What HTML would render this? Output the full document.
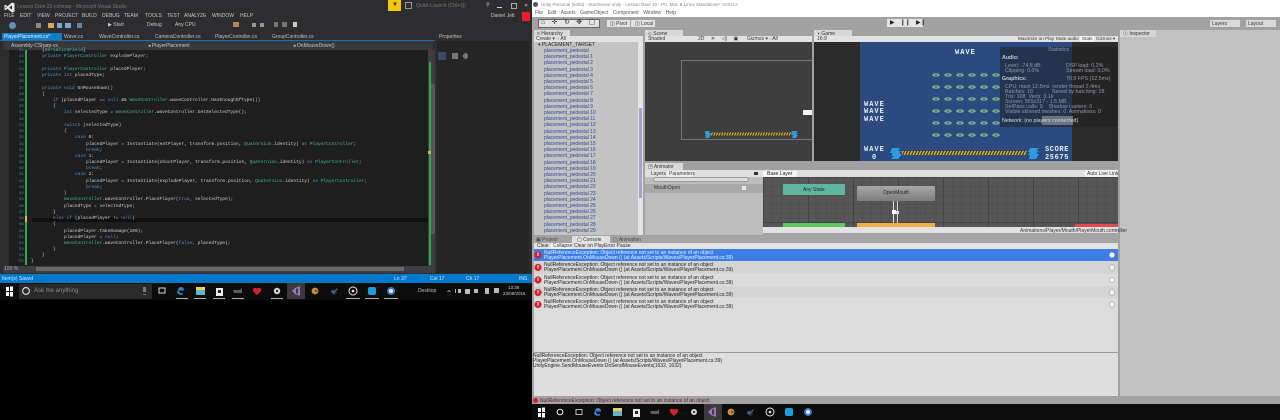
<!DOCTYPE html>
<html><head><meta charset="utf-8"><title>Screenshot</title>
<style>
html,body{margin:0;padding:0;background:#000}
#r{position:relative;width:1280px;height:420px;overflow:hidden;background:#000;font-family:"Liberation Sans",sans-serif}
#r div{position:absolute}
.t{position:absolute;white-space:pre;line-height:6px;font-size:5px}
#r .c{position:absolute;white-space:pre;left:0;font:4.55px/6px "Liberation Mono",monospace;color:#cfcfcf}
.k{color:#4f8fc8}.y{color:#45b49c}
.n{position:absolute;left:19px;font:4px/6px "Liberation Mono",monospace;color:#2b91af}
.h{color:#2f4a96}.b{color:#222}
.g{font:bold 7px/7px "Liberation Mono",monospace;color:#e8f0f0;letter-spacing:1px}
.s{color:#8f99a4;font-size:5.3px}
.m{color:#c8c8c8;top:13px}
</style></head><body><div id="r">

<!-- VISUAL STUDIO -->
<div style="left:0;top:0;width:532px;height:283px;background:#2d2d30"></div>
<svg style="position:absolute;left:4px;top:2px" width="11" height="11" viewBox="0 0 11 11"><path d="M8 0.5L10.5 1.5V9.5L8 10.5L3.5 6.8L1.5 8.3L0.5 7.6V3.4L1.5 2.7L3.5 4.2ZM8 3.2L5.2 5.5L8 7.8ZM1.6 4.4V6.6L2.7 5.5Z" fill="#e8e8e8"/></svg>
<span class="t" style="left:17px;top:4px;color:#777">Lesson Dare 22-cshmap - Microsoft Visual Studio</span>
<span class="t m" style="left:4px">FILE</span><span class="t m" style="left:20px">EDIT</span><span class="t m" style="left:37px">VIEW</span><span class="t m" style="left:55px">PROJECT</span><span class="t m" style="left:82px">BUILD</span><span class="t m" style="left:102px">DEBUG</span><span class="t m" style="left:124px">TEAM</span><span class="t m" style="left:145px">TOOLS</span><span class="t m" style="left:167px">TEST</span><span class="t m" style="left:184px">ANALYZE</span><span class="t m" style="left:212px">WINDOW</span><span class="t m" style="left:240px">HELP</span>
<div style="left:9px;top:22px;width:7px;height:7px;border-radius:50%;background:#5a92c4"></div>
<div style="left:36px;top:23px;width:5px;height:5px;background:#888"></div>
<div style="left:48px;top:23px;width:6px;height:5px;background:#d8a848"></div>
<div style="left:57px;top:23px;width:5px;height:5px;background:#7ea6d4"></div>
<div style="left:65px;top:23px;width:6px;height:5px;background:#7ea6d4"></div>
<div style="left:77px;top:23px;width:5px;height:5px;background:#6284b0"></div>
<span class="t" style="left:108px;top:22px;color:#c8c8c8">▶ Start</span>
<span class="t" style="left:147px;top:22px;color:#c8c8c8">Debug</span>
<span class="t" style="left:175px;top:22px;color:#c8c8c8">Any CPU</span>
<div style="left:233px;top:22px;width:6px;height:5px;background:#b08a48"></div>
<div style="left:252px;top:23px;width:4px;height:4px;background:#999"></div>
<div style="left:260px;top:23px;width:4px;height:4px;background:#999"></div>
<div style="left:274px;top:22px;width:4px;height:5px;background:#777"></div>
<div style="left:282px;top:22px;width:5px;height:5px;background:#777"></div>
<div style="left:293px;top:22px;width:4px;height:5px;background:#ccc"></div>
<div style="left:388px;top:0;width:13px;height:11px;background:#f6c800"></div>
<span class="t" style="left:392px;top:2px;color:#222;font-size:6px">▼</span>
<div style="left:405px;top:2px;width:5px;height:5px;border:1px solid #999"></div>
<span class="t" style="left:416px;top:3px;color:#777">Quick Launch (Ctrl+Q)</span>
<span class="t" style="left:486px;top:2px;color:#ccc">⚲</span>
<div style="left:497px;top:7px;width:5px;height:1px;background:#ccc"></div>
<div style="left:511px;top:3px;width:4px;height:4px;border:1px solid #aaa"></div>
<span class="t" style="left:524px;top:3px;color:#ccc">✕</span>
<span class="t" style="left:491px;top:13px;color:#c8c8c8">Daniel Jett</span>
<div style="left:522px;top:12px;width:8px;height:9px;background:#ee1c24"></div>

<!-- tabs -->
<div style="left:2px;top:33px;width:60px;height:8px;background:#1080c8"></div>
<span class="t" style="left:4px;top:34px;color:#f0f0f0">PlayerPlacement.cs*</span>
<span class="t" style="left:64px;top:34px;color:#c0c0c0">Wave.cs</span>
<span class="t" style="left:99px;top:34px;color:#c0c0c0">WaveController.cs</span>
<span class="t" style="left:155px;top:34px;color:#c0c0c0">CameraController.cs</span>
<span class="t" style="left:215px;top:34px;color:#c0c0c0">PlayerController.cs</span>
<span class="t" style="left:272px;top:34px;color:#c0c0c0">GroupController.cs</span>
<div style="left:0;top:40px;width:435px;height:1px;background:#1c6fa8"></div>
<div style="left:3px;top:41px;width:430px;height:9px;background:#38383c"></div>
<span class="t" style="left:11px;top:43px;color:#c8c8c8">Assembly-CSharp-vs</span>
<span class="t" style="left:148px;top:43px;color:#c8c8c8">◂ PlayerPlacement</span>
<span class="t" style="left:293px;top:43px;color:#c8c8c8">◂ OnMouseDown()</span>

<!-- editor -->
<div style="left:9px;top:50px;width:420px;height:216px;background:#1e1e1e"></div>
<div style="left:25px;top:50px;width:2px;height:215px;background:#22b04c"></div>
<div style="left:25px;top:216px;width:2px;height:6px;background:#e6c020"></div>
<div style="left:32px;top:218px;width:396px;height:4px;background:#0f0f0f"></div>
<div style="left:3px;top:266px;width:426px;height:7px;background:#3e3e42"></div>
<div style="left:36px;top:267px;width:368px;height:4px;background:#686868"></div>
<span class="t" style="left:4px;top:266px;color:#aaa">100 %</span>
<!-- right rail of editor -->
<div style="left:428px;top:50px;width:7px;height:223px;background:#3e3e42"></div>
<div style="left:428.5px;top:62px;width:2.5px;height:203px;background:#22b04c"></div>
<div style="left:428px;top:151px;width:6px;height:3px;background:#d4b828"></div>
<div style="left:431px;top:84px;width:4px;height:150px;background:#55555a"></div>

<span class="c" style="left:42px;top:48px">[<span class="y">SerializeField</span>]</span>
<span class="c" style="left:42px;top:54px"><span class="k">private</span> <span class="y">PlayerController</span> explodePlayer;</span>
<span class="c" style="left:42px;top:67px"><span class="k">private</span> <span class="y">PlayerController</span> placedPlayer;</span>
<span class="c" style="left:42px;top:73px"><span class="k">private</span> <span class="k">int</span> placedType;</span>
<span class="c" style="left:42px;top:86px"><span class="k">private</span> <span class="k">void</span> OnMouseDown()</span>
<span class="c" style="left:42px;top:92px">{</span>
<span class="c" style="left:53px;top:98px"><span class="k">if</span> (placedPlayer == <span class="k">null</span> &amp;&amp; <span class="y">WaveController</span>.waveController.HasEnoughOfType())</span>
<span class="c" style="left:53px;top:104px">{</span>
<span class="c" style="left:64px;top:110px"><span class="k">int</span> selectedType = <span class="y">WaveController</span>.waveController.GetSelectedType();</span>
<span class="c" style="left:64px;top:123px"><span class="k">switch</span> (selectedType)</span>
<span class="c" style="left:64px;top:129px">{</span>
<span class="c" style="left:75px;top:135px"><span class="k">case</span> 0:</span>
<span class="c" style="left:86px;top:142px">placedPlayer = Instantiate(eatPlayer, transform.position, <span class="y">Quaternion</span>.identity) <span class="k">as</span> <span class="y">PlayerController</span>;</span>
<span class="c" style="left:86px;top:148px"><span class="k">break</span>;</span>
<span class="c" style="left:75px;top:154px"><span class="k">case</span> 1:</span>
<span class="c" style="left:86px;top:160px">placedPlayer = Instantiate(shootPlayer, transform.position, <span class="y">Quaternion</span>.identity) <span class="k">as</span> <span class="y">PlayerController</span>;</span>
<span class="c" style="left:86px;top:166px"><span class="k">break</span>;</span>
<span class="c" style="left:75px;top:172px"><span class="k">case</span> 2:</span>
<span class="c" style="left:86px;top:179px">placedPlayer = Instantiate(explodePlayer, transform.position, <span class="y">Quaternion</span>.identity) <span class="k">as</span> <span class="y">PlayerController</span>;</span>
<span class="c" style="left:86px;top:185px"><span class="k">break</span>;</span>
<span class="c" style="left:64px;top:191px">}</span>
<span class="c" style="left:64px;top:197px"><span class="y">WaveController</span>.waveController.PlaceFlayer(<span class="k">true</span>, selectedType);</span>
<span class="c" style="left:64px;top:204px">placedType = selectedType;</span>
<span class="c" style="left:53px;top:210px">}</span>
<span class="c" style="left:53px;top:216px"><span class="k">else if</span> (placedPlayer != <span class="k">null</span>)</span>
<span class="c" style="left:53px;top:222px">{</span>
<span class="c" style="left:64px;top:229px">placedPlayer.TakeDamage(100);</span>
<span class="c" style="left:64px;top:235px">placedPlayer = <span class="k">null</span>;</span>
<span class="c" style="left:64px;top:241px"><span class="y">WaveController</span>.waveController.PlaceFlayer(<span class="k">false</span>, placedType);</span>
<span class="c" style="left:53px;top:247px">}</span>
<span class="c" style="left:42px;top:253px">}</span>
<span class="c" style="left:31px;top:259px">}</span>

<span class="n" style="top:48px">21</span><span class="n" style="top:54px">22</span><span class="n" style="top:60px">23</span><span class="n" style="top:67px">24</span><span class="n" style="top:73px">25</span><span class="n" style="top:79px">26</span><span class="n" style="top:86px">27</span><span class="n" style="top:92px">28</span><span class="n" style="top:98px">29</span><span class="n" style="top:104px">30</span><span class="n" style="top:110px">31</span><span class="n" style="top:117px">32</span><span class="n" style="top:123px">33</span><span class="n" style="top:129px">34</span><span class="n" style="top:135px">35</span><span class="n" style="top:142px">36</span><span class="n" style="top:148px">37</span><span class="n" style="top:154px">38</span><span class="n" style="top:160px">39</span><span class="n" style="top:166px">40</span><span class="n" style="top:172px">41</span><span class="n" style="top:179px">42</span><span class="n" style="top:185px">43</span><span class="n" style="top:191px">44</span><span class="n" style="top:197px">45</span><span class="n" style="top:204px">46</span><span class="n" style="top:210px">47</span><span class="n" style="top:216px">48</span><span class="n" style="top:222px">49</span><span class="n" style="top:229px">50</span><span class="n" style="top:235px">51</span><span class="n" style="top:241px">52</span><span class="n" style="top:247px">53</span><span class="n" style="top:253px">54</span><span class="n" style="top:259px">55</span>

<!-- Properties -->
<span class="t" style="left:439px;top:34px;color:#c0c0c0">Properties</span>
<div style="left:437px;top:41px;width:92px;height:232px;background:#252526"></div>
<div style="left:438px;top:52px;width:8px;height:8px;background:#3a4a60"></div>
<div style="left:452px;top:53px;width:6px;height:6px;background:#777"></div>
<div style="left:463px;top:53px;width:5px;height:6px;background:#777;border-radius:50%"></div>
<!-- status -->
<div style="left:0;top:274px;width:532px;height:9px;background:#007acc"></div>
<span class="t" style="left:2px;top:276px;color:#d8eaf8">Item(s) Saved</span>
<span class="t" style="left:394px;top:276px;color:#d8eaf8">Ln 37</span>
<span class="t" style="left:430px;top:276px;color:#d8eaf8">Col 17</span>
<span class="t" style="left:466px;top:276px;color:#d8eaf8">Ch 17</span>
<span class="t" style="left:519px;top:276px;color:#d8eaf8">INS</span>

<!-- left taskbar -->
<div style="left:0;top:283px;width:532px;height:17px;background:#0c0c0c"></div>
<div style="left:19px;top:284px;width:133px;height:15px;background:#2a2a2a"></div>
<span class="t" style="left:34px;top:288px;color:#8a8a8a;font-size:6px">Ask me anything</span>
<div style="left:287px;top:283px;width:18px;height:16px;background:#3a3a3a"></div>
<span class="t" style="left:418px;top:288px;color:#bbb">Desktop</span>
<span class="t" style="left:508px;top:285px;color:#ccc;font-size:4.5px">13:38</span>
<span class="t" style="left:503px;top:291px;color:#ccc;font-size:4.5px">23/08/2015</span>
<svg style="position:absolute;left:0;top:283px" width="532" height="17">
 <path d="M6 4h3v4H6zM10 3.5h3V8h-3zM6 9h3v4H6zM10 9h3v4.5h-3z" fill="#fff"/>
 <circle cx="26" cy="8" r="3.4" fill="none" stroke="#e8e8e8" stroke-width="1.1"/>
 <path d="M143 4h3v5h-3zM143 11h3v1h-3z" fill="#777"/>
 <rect x="159" y="5" width="6" height="5" fill="none" stroke="#ccc" stroke-width="1.1"/>
 <path d="M178 8q0-4 3-4t3 3.5h-5q0 3.5 4 2.5v1.5q-6 1-6-3z" fill="#2a86d6"/>
 <path d="M196 4h9v8h-9z" fill="#e8d060"/><path d="M196 7h9v5h-9z" fill="#62b8c8"/>
 <path d="M216 5h7v8h-7z" fill="#eee"/><path d="M218 7h3v3h-3z" fill="#222"/>
 <path d="M233 7h7l2-2v5h-8z" fill="#5e5e5e"/>
 <path d="M253 6q1-2 4-.5q3-1.5 4 .5t-4 6q-5-4-4-6z" fill="#d8222a"/>
 <circle cx="277" cy="8" r="3.2" fill="#d8d8d8"/><circle cx="277" cy="8" r="1.2" fill="#222"/>
 <path d="M292 8l3-3 5-2v10l-5-2zM296 6v4l2 1V5z" fill="#a070c8"/>
 <circle cx="315" cy="8" r="3.4" fill="#e88a20"/><circle cx="316" cy="8" r="1.4" fill="#3a5a90"/>
 <path d="M331 9l3 2 4-6-4 3-2-1z" fill="#7ea4d0"/><circle cx="334" cy="9" r="3" fill="#22395a" opacity=".6"/>
 <circle cx="353" cy="8" r="4" fill="none" stroke="#e8e8e8"/><circle cx="353" cy="8" r="1.3" fill="#e8e8e8"/>
 <rect x="368" y="4" width="8" height="8" rx="2" fill="#18a0e0"/>
 <circle cx="391" cy="8" r="4" fill="#3a78d0"/><circle cx="391" cy="8" r="2" fill="#e8f0f8"/>
 <g fill="#bbb"><path d="M447 9l2-2 2 2h-1l-1-1-1 1zM455 6h1v4h-1zM458 6h3v4h-3zM465 6h5v5h-5zM474 6h4v4h-4zM485 5h4v6h-4zM494 5h5v5h-5z"/></g>
 <g fill="#aaa"><rect x="176" y="15" width="12" height="1"/><rect x="194" y="15" width="12" height="1"/><rect x="213" y="15" width="12" height="1"/><rect x="232" y="15" width="12" height="1"/><rect x="271" y="15" width="12" height="1"/><rect x="346" y="15" width="14" height="1"/><rect x="365" y="15" width="14" height="1"/><rect x="384" y="15" width="14" height="1"/></g>
</svg>

<!-- UNITY -->
<div style="left:532px;top:0;width:748px;height:405px;background:#a2a2a2"></div>
<div style="left:532px;top:0;width:748px;height:17px;background:#fff"></div>
<div style="left:533px;top:2px;width:5px;height:5px;border-radius:50%;background:#555"></div>
<span class="t" style="left:541px;top:2px;color:#888;font-size:4.5px">Unity Personal (64bit) - StartScene.unity - Lesson Dare 10 - PC, Mac &amp; Linux Standalone* &lt;DX11&gt;</span>
<span class="t" style="left:535px;top:10px;color:#555;word-spacing:3.2px">File Edit Assets GameObject Component Window Help</span>
<!-- toolbar -->
<div style="left:538px;top:19px;width:62px;height:9px;background:#e4e4e4;border:1px solid #666;box-sizing:border-box"></div>
<span class="t" style="left:541px;top:20px;color:#333;font-size:7px;word-spacing:4.5px">⌂ ✛ ↻ ✥ ▢</span>
<div style="left:607px;top:20px;width:23px;height:7px;background:#e2e2e2"></div><span class="t" style="left:610px;top:21px;color:#333">◫ Pivot</span>
<div style="left:631px;top:20px;width:24px;height:7px;background:#e2e2e2"></div><span class="t" style="left:635px;top:21px;color:#333">◫ Local</span>
<div style="left:887px;top:19px;width:36px;height:8px;background:#e4e4e4"></div>
<span class="t" style="left:890px;top:20px;color:#222;font-size:6px;word-spacing:4px">▶ ❙❙ ▶❙</span>
<div style="left:1210px;top:20px;width:30px;height:7px;background:#d8d8d8"></div><span class="t" style="left:1212px;top:21px;color:#333">Layers</span>
<div style="left:1246px;top:20px;width:30px;height:7px;background:#d8d8d8"></div><span class="t" style="left:1248px;top:21px;color:#333">Layout</span>

<!-- Hierarchy -->
<div style="left:534px;top:30px;width:36px;height:7px;background:#d8d8d8"></div>
<span class="t" style="left:537px;top:31px;color:#333">≡ Hierarchy</span>
<div style="left:534px;top:36px;width:109px;height:6px;background:#e2e2e2"></div>
<span class="t" style="left:536px;top:36px;color:#333">Create ▾ ◌ All</span>
<div style="left:534px;top:42px;width:109px;height:193px;background:#c3c3c3"></div>
<div style="left:638px;top:42px;width:5px;height:193px;background:#e4e4e4"></div>
<div style="left:639px;top:108px;width:3px;height:90px;background:#a0a4c8"></div>
<span class="t h" style="left:538px;top:42px;color:#222">▾ PLACEMENT_TARGET</span>
<span class="t h" style="left:544px;top:48px">placement_pedestal</span>
<span class="t h" style="left:544px;top:54px">placement_pedestal 1</span>
<span class="t h" style="left:544px;top:60px">placement_pedestal 2</span>
<span class="t h" style="left:544px;top:67px">placement_pedestal 3</span>
<span class="t h" style="left:544px;top:73px">placement_pedestal 4</span>
<span class="t h" style="left:544px;top:79px">placement_pedestal 5</span>
<span class="t h" style="left:544px;top:85px">placement_pedestal 6</span>
<span class="t h" style="left:544px;top:91px">placement_pedestal 7</span>
<span class="t h" style="left:544px;top:98px">placement_pedestal 8</span>
<span class="t h" style="left:544px;top:104px">placement_pedestal 9</span>
<span class="t h" style="left:544px;top:110px">placement_pedestal 10</span>
<span class="t h" style="left:544px;top:116px">placement_pedestal 11</span>
<span class="t h" style="left:544px;top:122px">placement_pedestal 12</span>
<span class="t h" style="left:544px;top:129px">placement_pedestal 13</span>
<span class="t h" style="left:544px;top:135px">placement_pedestal 14</span>
<span class="t h" style="left:544px;top:141px">placement_pedestal 15</span>
<span class="t h" style="left:544px;top:147px">placement_pedestal 16</span>
<span class="t h" style="left:544px;top:153px">placement_pedestal 17</span>
<span class="t h" style="left:544px;top:160px">placement_pedestal 18</span>
<span class="t h" style="left:544px;top:166px">placement_pedestal 19</span>
<span class="t h" style="left:544px;top:172px">placement_pedestal 20</span>
<span class="t h" style="left:544px;top:178px">placement_pedestal 21</span>
<span class="t h" style="left:544px;top:184px">placement_pedestal 22</span>
<span class="t h" style="left:544px;top:191px">placement_pedestal 23</span>
<span class="t h" style="left:544px;top:197px">placement_pedestal 24</span>
<span class="t h" style="left:544px;top:203px">placement_pedestal 25</span>
<span class="t h" style="left:544px;top:209px">placement_pedestal 26</span>
<span class="t h" style="left:544px;top:215px">placement_pedestal 27</span>
<span class="t h" style="left:544px;top:222px">placement_pedestal 28</span>
<span class="t h" style="left:544px;top:228px">placement_pedestal 29</span>

<!-- Scene -->
<div style="left:645px;top:30px;width:38px;height:7px;background:#d8d8d8"></div>
<span class="t" style="left:648px;top:31px;color:#333">◇ Scene</span>
<div style="left:645px;top:36px;width:167px;height:6px;background:#e2e2e2"></div>
<span class="t" style="left:648px;top:36px;color:#333">Shaded</span>
<span class="t" style="left:698px;top:36px;color:#333;word-spacing:5px">2D ☀ ◁) ▣</span>
<span class="t" style="left:747px;top:36px;color:#333">Gizmos ▾ ◌All</span>
<div style="left:645px;top:42px;width:167px;height:119px;background:#3e3e3e"></div>
<div style="left:681px;top:60px;width:132px;height:80px;border:1px solid #777;border-right:0;box-sizing:border-box"></div>
<div style="left:803px;top:110px;width:9px;height:5px;background:#f4f4f4"></div>
<svg style="position:absolute;left:703px;top:129px" width="100" height="10">
 <defs><pattern id="hs" width="2.6" height="3" patternUnits="userSpaceOnUse" patternTransform="skewX(-25)"><rect width="2.6" height="3" fill="#222"/><rect width="1.5" height="3" fill="#d8b828"/></pattern></defs>
 <rect x="8" y="3.5" width="80" height="3" fill="url(#hs)"/>
 <path d="M2 2h5l-1 2h2l-1 2h1l-2 3H2l1-2H2l1-2H2z" fill="#2a9ce0"/>
 <path d="M89 2h6l-2 2h2l-2 2h2l-2 3h-4l1-3h-2l1-2h-1z" fill="#2a9ce0"/>
</svg>

<!-- Game -->
<div style="left:814px;top:30px;width:38px;height:7px;background:#d8d8d8"></div>
<span class="t" style="left:817px;top:31px;color:#333">◖ Game</span>
<div style="left:814px;top:36px;width:304px;height:6px;background:#e2e2e2"></div>
<span class="t" style="left:817px;top:36px;color:#333">16:9</span>
<span class="t" style="left:1018px;top:36px;color:#333;font-size:4.6px">Maximize on Play</span>
<span class="t" style="left:1056px;top:36px;color:#333;font-size:4.6px">Mute audio</span>
<div style="left:1080px;top:36px;width:14px;height:6px;background:#f4f4f4"></div>
<span class="t" style="left:1082px;top:36px;color:#333;font-size:4.6px">Stats</span>
<span class="t" style="left:1096px;top:36px;color:#333;font-size:4.6px">Gizmos ▾</span>
<div style="left:814px;top:42px;width:304px;height:119px;background:#2b2b2b"></div>
<div style="left:860px;top:42px;width:212px;height:119px;background:#2b4a80"></div>
<svg style="position:absolute;left:860px;top:42px" width="212" height="119">
 <defs>
 <pattern id="e" width="12" height="12" patternUnits="userSpaceOnUse" x="70" y="28"><ellipse cx="6" cy="5" rx="3.8" ry="1.8" fill="#7db38f"/><ellipse cx="6" cy="5" rx="1.4" ry=".8" fill="#3c6868"/></pattern>
 <pattern id="hz" width="3" height="4" patternUnits="userSpaceOnUse" patternTransform="skewX(-25)"><rect width="3" height="4" fill="#222"/><rect width="1.8" height="4" fill="#d8b828"/></pattern>
 </defs>
 <rect x="70" y="28" width="72" height="72" fill="url(#e)"/>
 <rect x="42" y="109" width="125" height="4" fill="url(#hz)"/>
 <path d="M32 106h8l-2 3h3l-2 3h3l-4 5h-7l3-3h-3l2-3h-3z" fill="#2a9ce0"/>
 <path d="M170 106h9l-3 3h3l-3 3h3l-3 5h-7l1-4h-2l2-3h-2z" fill="#2a9ce0"/>
</svg>
<span class="t g" style="left:955px;top:50px">WAVE</span>
<span class="t g" style="left:864px;top:102px">WAVE</span>
<span class="t g" style="left:864px;top:109px">WAVE</span>
<span class="t g" style="left:864px;top:117px">WAVE</span>
<span class="t g" style="left:864px;top:147px">WAVE</span>
<span class="t g" style="left:872px;top:155px">0</span>
<span class="t g" style="left:1045px;top:147px;letter-spacing:.6px">SCORE</span>
<span class="t g" style="left:1045px;top:155px;letter-spacing:.6px">25675</span>
<!-- stats overlay -->
<div style="left:1000px;top:47px;width:118px;height:80px;background:rgba(30,30,30,.5)"></div>
<span class="t s" style="left:1048px;top:47px">Statistics</span>
<span class="t s" style="left:1002px;top:55px;color:#c4ccd2;font-weight:bold">Audio:</span>
<span class="t s" style="left:1005px;top:63px">Level: -74.8 dB</span>
<span class="t s" style="left:1005px;top:68px">Clipping: 0.0%</span>
<span class="t s" style="left:1066px;top:63px">DSP load: 0.2%</span>
<span class="t s" style="left:1066px;top:68px">Stream load: 0.0%</span>
<span class="t s" style="left:1002px;top:76px;color:#c4ccd2;font-weight:bold">Graphics:</span>
<span class="t s" style="left:1066px;top:76px">70.9 FPS (12.5ms)</span>
<span class="t s" style="left:1005px;top:84px">CPU: main 12.5ms  render thread 2.4ms</span>
<span class="t s" style="left:1005px;top:89px">Batches: 18</span>
<span class="t s" style="left:1052px;top:89px">Saved by batching: 28</span>
<span class="t s" style="left:1005px;top:94px">Tris: 108  Verts: 3.1k</span>
<span class="t s" style="left:1005px;top:99px">Screen: 565x317 - 1.5 MB</span>
<span class="t s" style="left:1005px;top:104px">SetPass calls: 9    Shadow casters: 0</span>
<span class="t s" style="left:1005px;top:109px">Visible skinned meshes: 0  Animations: 0</span>
<div style="left:1042px;top:116px;width:31px;height:9px;background:rgba(170,170,170,.55)"></div>
<span class="t s" style="left:1002px;top:118px;color:#d4dae0">Network: (no players connected)</span>

<!-- Inspector -->
<div style="left:1120px;top:30px;width:160px;height:375px;background:#c2c2c2"></div>
<div style="left:1120px;top:30px;width:36px;height:7px;background:#d6d6d6"></div>
<span class="t" style="left:1123px;top:31px;color:#333">ⓘ Inspector</span>

<!-- Animator -->
<div style="left:645px;top:161px;width:473px;height:8px;background:#a0a0a0"></div>
<div style="left:645px;top:163px;width:38px;height:7px;background:#d8d8d8"></div>
<span class="t" style="left:648px;top:164px;color:#333">◳ Animator</span>
<div style="left:645px;top:170px;width:473px;height:7px;background:#e0e0e0"></div>
<span class="t" style="left:651px;top:171px;color:#333">Layers</span>
<div style="left:667px;top:171px;width:26px;height:6px;background:#f0f0f0"></div>
<span class="t" style="left:669px;top:171px;color:#333">Parameters</span>
<div style="left:754px;top:172px;width:4px;height:3px;background:#333"></div>
<div style="left:645px;top:177px;width:118px;height:58px;background:#bdbdbd"></div>
<div style="left:653px;top:177px;width:96px;height:5px;border-radius:3px;background:#dcdcdc;border:1px solid #999;box-sizing:border-box"></div>
<div style="left:645px;top:184px;width:118px;height:9px;background:#a9a9a9"></div>
<span class="t" style="left:654px;top:185px;color:#333">MouthOpen</span>
<div style="left:742px;top:186px;width:4px;height:4px;background:#e8e8e8"></div>
<div style="left:763px;top:170px;width:355px;height:7px;background:#e0e0e0"></div>
<div style="left:763px;top:171px;width:34px;height:6px;background:#f4f4f4"></div>
<span class="t" style="left:767px;top:171px;color:#222">Base Layer</span>
<div style="left:1085px;top:170px;width:32px;height:7px;background:#f2f2f2"></div>
<span class="t" style="left:1087px;top:171px;color:#333">Auto Live Link</span>
<div style="left:763px;top:177px;width:355px;height:50px;background-color:#565656;background-image:linear-gradient(90deg,#444 1px,transparent 1px),linear-gradient(#444 1px,transparent 1px),linear-gradient(90deg,#505050 1px,transparent 1px),linear-gradient(#505050 1px,transparent 1px);background-size:45px 45px,45px 45px,9px 9px,9px 9px"></div>
<div style="left:783px;top:184px;width:62px;height:11px;background:#5fb79e;border-radius:1px"></div>
<span class="t" style="left:803px;top:187px;color:#223">Any State</span>
<div style="left:857px;top:186px;width:78px;height:15px;background:linear-gradient(#a8a8a8,#7c7c7c);border-radius:1px"></div>
<span class="t" style="left:883px;top:190px;color:#222">OpenMouth</span>
<div style="left:893px;top:201px;width:1px;height:22px;background:#ddd"></div>
<div style="left:897px;top:201px;width:1px;height:22px;background:#ddd"></div>
<div style="left:892px;top:210px;width:4px;height:4px;background:#fff"></div>
<div style="left:896px;top:211px;width:3px;height:3px;background:#ddd"></div>
<div style="left:783px;top:223px;width:62px;height:4px;background:#5fc85f"></div>
<div style="left:857px;top:223px;width:78px;height:4px;background:#f0b040"></div>
<div style="left:1075px;top:224px;width:43px;height:3px;background:#e04a50"></div>
<div style="left:763px;top:227px;width:355px;height:6px;background:#e2e2e2"></div>
<span class="t" style="left:1020px;top:228px;color:#333">Animations/Player/Mouth/PlayerMouth.controller</span>

<!-- Console -->
<div style="left:534px;top:236px;width:584px;height:7px;background:#a4a4a4"></div>
<span class="t" style="left:536px;top:237px;color:#444">▣ Project</span>
<div style="left:572px;top:236px;width:38px;height:7px;background:#e0e0e0"></div>
<span class="t" style="left:577px;top:237px;color:#333">▢ Console</span>
<span class="t" style="left:613px;top:237px;color:#444">▢ Animation</span>
<div style="left:534px;top:243px;width:584px;height:6px;background:#e2e2e2"></div>
<span class="t" style="left:537px;top:243px;color:#333">Clear</span>
<div style="left:551px;top:243px;width:21px;height:6px;background:#f2f2f2"></div><span class="t" style="left:553px;top:243px;color:#333">Collapse</span>
<span class="t" style="left:574px;top:243px;color:#333">Clear on Play</span>
<span class="t" style="left:604px;top:243px;color:#333">Error Pause</span>
<div style="left:534px;top:249px;width:584px;height:103px;background:#dcdcdc"></div>
<div style="left:534px;top:249px;width:584px;height:12px;background:#3d7de6"></div>
<div style="left:534px;top:261px;width:584px;height:13px;background:#d4d4d4"></div>
<div style="left:534px;top:286px;width:584px;height:12px;background:#d4d4d4"></div>
<svg style="position:absolute;left:534px;top:249px" width="584" height="62">
 <g fill="#d81e2a"><circle cx="4" cy="6" r="3.6"/><circle cx="4" cy="18.5" r="3.6"/><circle cx="4" cy="31" r="3.6"/><circle cx="4" cy="43.5" r="3.6"/><circle cx="4" cy="55.5" r="3.6"/></g>
 <g fill="#fff"><rect x="3.5" y="3.5" width="1" height="3.5"/><rect x="3.5" y="16" width="1" height="3.5"/><rect x="3.5" y="28.5" width="1" height="3.5"/><rect x="3.5" y="41" width="1" height="3.5"/><rect x="3.5" y="53" width="1" height="3.5"/></g>
 <g fill="#f2f2f2" stroke="#888" stroke-width=".5"><circle cx="578" cy="6" r="2.8"/><circle cx="578" cy="18.5" r="2.8"/><circle cx="578" cy="31" r="2.8"/><circle cx="578" cy="43.5" r="2.8"/><circle cx="578" cy="55.5" r="2.8"/></g>
</svg>
<span class="t" style="left:544px;top:249.5px;color:#eaf1fb">NullReferenceException: Object reference not set to an instance of an object</span>
<span class="t" style="left:544px;top:254.5px;color:#eaf1fb">PlayerPlacement.OnMouseDown () (at Assets/Scripts/Waves/PlayerPlacement.cs:39)</span>
<span class="t b" style="left:544px;top:262px">NullReferenceException: Object reference not set to an instance of an object</span>
<span class="t b" style="left:544px;top:267px">PlayerPlacement.OnMouseDown () (at Assets/Scripts/Waves/PlayerPlacement.cs:39)</span>
<span class="t b" style="left:544px;top:274.5px">NullReferenceException: Object reference not set to an instance of an object</span>
<span class="t b" style="left:544px;top:279.5px">PlayerPlacement.OnMouseDown () (at Assets/Scripts/Waves/PlayerPlacement.cs:39)</span>
<span class="t b" style="left:544px;top:287px">NullReferenceException: Object reference not set to an instance of an object</span>
<span class="t b" style="left:544px;top:292px">PlayerPlacement.OnMouseDown () (at Assets/Scripts/Waves/PlayerPlacement.cs:39)</span>
<span class="t b" style="left:544px;top:299px">NullReferenceException: Object reference not set to an instance of an object</span>
<span class="t b" style="left:544px;top:304px">PlayerPlacement.OnMouseDown () (at Assets/Scripts/Waves/PlayerPlacement.cs:39)</span>
<div style="left:534px;top:352px;width:584px;height:1px;background:#999"></div>
<div style="left:534px;top:353px;width:584px;height:43px;background:#dedede"></div>
<span class="t b" style="left:533px;top:353px">NullReferenceException: Object reference not set to an instance of an object</span>
<span class="t b" style="left:533px;top:358px">PlayerPlacement.OnMouseDown () (at Assets/Scripts/Waves/PlayerPlacement.cs:39)</span>
<span class="t b" style="left:533px;top:363px">UnityEngine.SendMouseEvents:DoSendMouseEvents(1632, 1632)</span>
<!-- status -->
<div style="left:532px;top:396px;width:748px;height:9px;background:#a2a2a2"></div>
<div style="left:533px;top:398px;width:5px;height:5px;border-radius:50%;background:#d81e2a"></div>
<span class="t" style="left:540px;top:398px;color:#6a1a24">NullReferenceException: Object reference not set to an instance of an object</span>

<!-- right taskbar -->
<div style="left:532px;top:404px;width:748px;height:16px;background:#0c0c0c"></div>
<div style="left:704px;top:404px;width:18px;height:16px;background:#3a3a3a"></div>
<svg style="position:absolute;left:532px;top:404px" width="300" height="16">
 <path d="M6 4h3v4H6zM10 3.5h3V8h-3zM6 9h3v4H6zM10 9h3v4.5h-3z" fill="#fff"/>
 <circle cx="28" cy="8" r="2.8" fill="none" stroke="#e8e8e8" stroke-width="1"/>
 <rect x="44" y="5.5" width="6" height="5" fill="none" stroke="#bbb"/>
 <path d="M63 8q0-4 3-4t3 3.5h-5q0 3.5 4 2.5v1.5q-6 1-6-3z" fill="#2a86d6"/>
 <path d="M81 4h9v8h-9z" fill="#e8d060"/><path d="M81 7h9v5h-9z" fill="#62b8c8"/>
 <path d="M101 5h7v8h-7z" fill="#eee"/><path d="M103 7h3v3h-3z" fill="#222"/>
 <path d="M118 7h7l2-2v5h-8z" fill="#5e5e5e"/>
 <path d="M138 6q1-2 4-.5q3-1.5 4 .5t-4 6q-5-4-4-6z" fill="#d8222a"/>
 <circle cx="162" cy="8" r="3" fill="#d8d8d8"/><circle cx="162" cy="8" r="1.1" fill="#222"/>
 <path d="M176 8l3-3 5-2v10l-5-2zM180 6v4l2 1V5z" fill="#a070c8"/>
 <circle cx="199" cy="8" r="3.4" fill="#e88a20"/><circle cx="200" cy="8" r="1.4" fill="#3a5a90"/>
 <path d="M215 9l3 2 4-6-4 3-2-1z" fill="#7ea4d0"/><circle cx="218" cy="9" r="3" fill="#22395a" opacity=".6"/>
 <circle cx="238" cy="8" r="4" fill="none" stroke="#e8e8e8"/><circle cx="238" cy="8" r="1.3" fill="#e8e8e8"/>
 <rect x="253" y="4" width="8" height="8" rx="2" fill="#18a0e0"/>
 <circle cx="276" cy="8" r="4" fill="#3a78d0"/><circle cx="276" cy="8" r="2" fill="#e8f0f8"/>
</svg>
</div></body></html>
